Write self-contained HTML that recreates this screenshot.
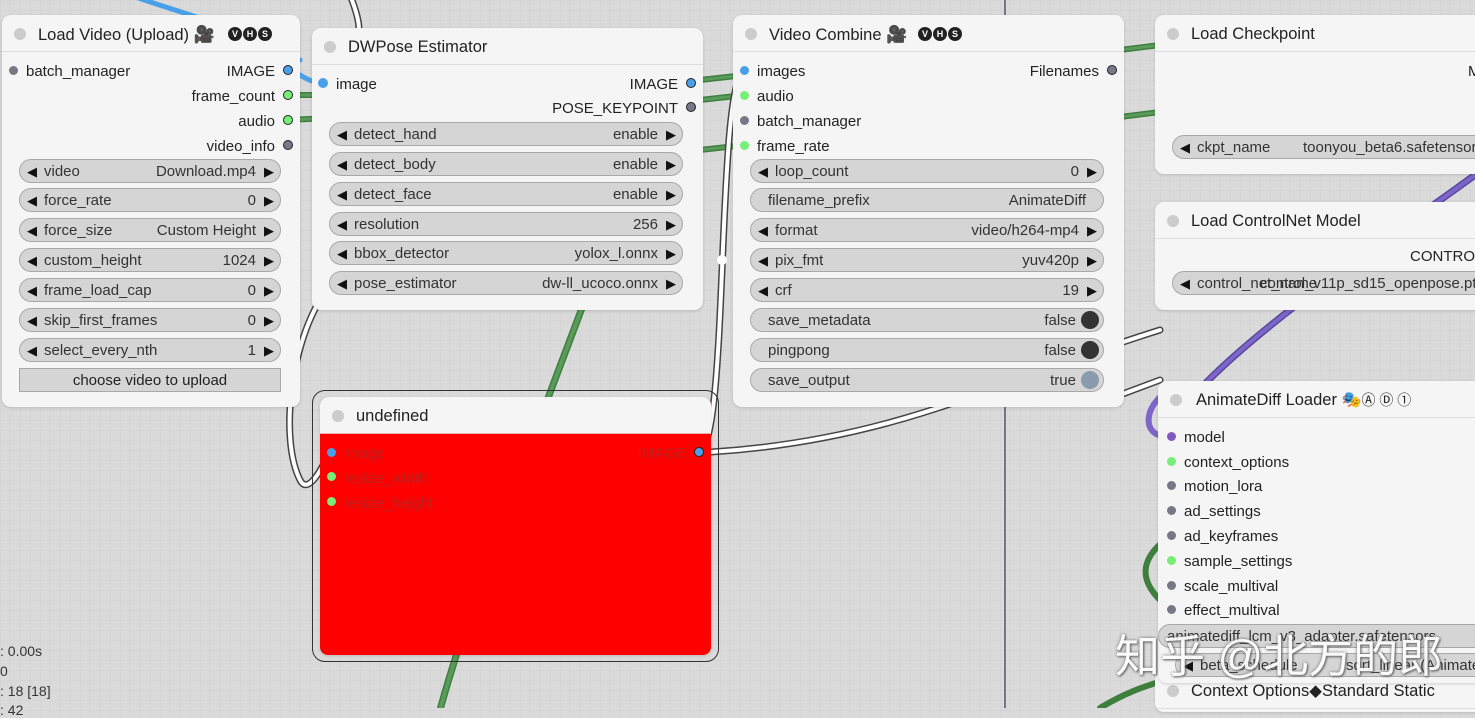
<!DOCTYPE html>
<html><head><meta charset="utf-8"><style>
*{box-sizing:border-box;margin:0;padding:0}
body{width:1475px;height:708px;overflow:hidden;position:relative;background:#dadada;font-family:"Liberation Sans",Arial,sans-serif;color:#222;font-size:15px;
background-image:linear-gradient(#d5d5d5 1px,transparent 1px),linear-gradient(90deg,#d5d5d5 1px,transparent 1px);background-size:10px 10px}
.n{position:absolute;background:#f5f5f5;border-radius:9px;box-shadow:0 1px 3px rgba(0,0,0,.15);overflow:hidden}
.t{position:absolute;left:0;right:0;top:0;height:37px;border-bottom:1px solid #ddd;font-size:16.5px;line-height:39px;padding-left:36px;white-space:nowrap}
.t:before{content:"";position:absolute;left:12px;top:13px;width:12px;height:12px;border-radius:50%;background:#ccc}
.r{position:absolute;font-size:15px;line-height:16px;white-space:nowrap}
.d{position:absolute;width:10px;height:10px;border-radius:50%;border:1px solid #222}
.di{position:absolute;width:9px;height:9px;border-radius:50%}
.w{position:absolute;height:24px;border-radius:12px;background:#d5d5d5;border:1px solid #a8a8a8;font-size:15px;line-height:24px;color:#333;white-space:nowrap;overflow:hidden}
.w .l{position:absolute;left:24px}.w .v{position:absolute;right:24px}
.w .a{position:absolute;left:7px;font-size:13px;color:#111}.w .b{position:absolute;right:6px;font-size:13px;color:#111}
.w.nt .l{left:17px}.w.nt .v{right:17px}
.w.tg .v{right:27px}
.w.tg i{position:absolute;right:4px;top:2px;width:18px;height:18px;border-radius:50%;background:#333}
.bd{position:absolute;width:14px;height:14px;border-radius:50%;background:#222;color:#fff;font-size:9px;line-height:14px;text-align:center;font-weight:bold;top:12px}
</style></head><body>
<svg width="1475" height="708" style="position:absolute;left:0;top:0">
<line x1="1005" y1="0" x2="1005" y2="708" stroke="#556" stroke-width="1.5"/>
<g fill="none" stroke-linecap="round">
<path d="M130 -5 C170 10 250 30 300 60" stroke="#4aa0e8" stroke-width="5"/>
<path d="M287 70 C300 72 305 82 323 83" stroke="#4aa0e8" stroke-width="5"/>
<path d="M287 95 L330 95" stroke="#3e7f3e" stroke-width="6"/><path d="M287 95 L330 95" stroke="#5a9a5a" stroke-width="3"/>
<path d="M287 120 L330 118" stroke="#3e7f3e" stroke-width="6"/><path d="M287 120 L330 118" stroke="#5a9a5a" stroke-width="3"/>
<path d="M700 80 L745 75 M700 100 L745 95 M700 150 L745 145" stroke="#3e7f3e" stroke-width="6"/>
<path d="M700 80 L745 75 M700 100 L745 95 M700 150 L745 145" stroke="#5a9a5a" stroke-width="3"/>
<path d="M1120 50 L1160 45 M1120 117 L1160 112" stroke="#3e7f3e" stroke-width="6"/>
<path d="M1120 50 L1160 45 M1120 117 L1160 112" stroke="#5a9a5a" stroke-width="3"/>
<path d="M585 300 C540 420 470 600 440 710" stroke="#3e7f3e" stroke-width="7"/>
<path d="M585 300 C540 420 470 600 440 710" stroke="#5a9a5a" stroke-width="4"/>
<path d="M1100 708 C1130 690 1150 685 1165 680" stroke="#3e7f3e" stroke-width="6"/>
<path d="M1160 600 C1140 580 1140 560 1165 540" stroke="#3e7f3e" stroke-width="6"/>
<path d="M1475 175 C1400 230 1250 330 1190 400" stroke="#5a47a0" stroke-width="7"/>
<path d="M1475 175 C1400 230 1250 330 1190 400" stroke="#7e66c8" stroke-width="4"/>
<path d="M1180 385 C1140 400 1140 440 1170 436" stroke="#7e66c8" stroke-width="6"/>
<g stroke="#444" stroke-width="7"><path d="M350 -5 C360 20 360 30 358 40"/><path d="M320 300 C290 350 280 440 300 480 C310 500 330 450 330 452"/><path d="M698 452 C730 452 715 80 745 70"/><path d="M711 452 C900 440 1000 380 1160 330"/><path d="M1120 395 L1160 380"/></g>
<g stroke="#fff" stroke-width="4"><path d="M350 -5 C360 20 360 30 358 40"/><path d="M320 300 C290 350 280 440 300 480 C310 500 330 450 330 452"/><path d="M698 452 C730 452 715 80 745 70"/><path d="M711 452 C900 440 1000 380 1160 330"/><path d="M1120 395 L1160 380"/></g>
</g>
<circle cx="722" cy="260" r="5" fill="#fff"/>
</svg>

<!-- Load Video -->
<div class="n" style="left:2px;top:15px;width:298px;height:392px">
<div class="t">Load Video (Upload) <span style="font-size:17px">🎥</span></div>
<div class="bd" style="left:226px">V</div><div class="bd" style="left:241px">H</div><div class="bd" style="left:256px">S</div>
<div class="di" style="left:7px;top:51px;background:#778"></div><div class="r" style="left:24px;top:49px">batch_manager</div>
<div class="r" style="right:25px;top:49px">IMAGE</div><div class="d" style="right:7px;top:50px;background:#4aa0e8"></div>
<div class="r" style="right:25px;top:74px">frame_count</div><div class="d" style="right:7px;top:75px;background:#7e7"></div>
<div class="r" style="right:25px;top:99px">audio</div><div class="d" style="right:7px;top:100px;background:#7e7"></div>
<div class="r" style="right:25px;top:124px">video_info</div><div class="d" style="right:7px;top:125px;background:#778"></div>
<div class="w" style="left:17px;width:262px;top:144px"><span class="a">◀</span><span class="l">video</span><span class="v">Download.mp4</span><span class="b">▶</span></div>
<div class="w" style="left:17px;width:262px;top:173px"><span class="a">◀</span><span class="l">force_rate</span><span class="v">0</span><span class="b">▶</span></div>
<div class="w" style="left:17px;width:262px;top:203px"><span class="a">◀</span><span class="l">force_size</span><span class="v">Custom Height</span><span class="b">▶</span></div>
<div class="w" style="left:17px;width:262px;top:233px"><span class="a">◀</span><span class="l">custom_height</span><span class="v">1024</span><span class="b">▶</span></div>
<div class="w" style="left:17px;width:262px;top:263px"><span class="a">◀</span><span class="l">frame_load_cap</span><span class="v">0</span><span class="b">▶</span></div>
<div class="w" style="left:17px;width:262px;top:293px"><span class="a">◀</span><span class="l">skip_first_frames</span><span class="v">0</span><span class="b">▶</span></div>
<div class="w" style="left:17px;width:262px;top:323px"><span class="a">◀</span><span class="l">select_every_nth</span><span class="v">1</span><span class="b">▶</span></div>
<div class="w" style="left:17px;width:262px;top:353px;border-radius:0;text-align:center;color:#222">choose video to upload</div>
</div>

<!-- DWPose -->
<div class="n" style="left:312px;top:28px;width:391px;height:282px">
<div class="t">DWPose Estimator</div>
<div class="d" style="left:6px;top:50px;background:#4aa0e8;border:none"></div><div class="r" style="left:24px;top:49px">image</div>
<div class="r" style="right:25px;top:49px">IMAGE</div><div class="d" style="right:7px;top:50px;background:#4aa0e8"></div>
<div class="r" style="right:25px;top:73px">POSE_KEYPOINT</div><div class="d" style="right:7px;top:74px;background:#778"></div>
<div class="w" style="left:17px;width:354px;top:94px"><span class="a">◀</span><span class="l">detect_hand</span><span class="v">enable</span><span class="b">▶</span></div>
<div class="w" style="left:17px;width:354px;top:124px"><span class="a">◀</span><span class="l">detect_body</span><span class="v">enable</span><span class="b">▶</span></div>
<div class="w" style="left:17px;width:354px;top:154px"><span class="a">◀</span><span class="l">detect_face</span><span class="v">enable</span><span class="b">▶</span></div>
<div class="w" style="left:17px;width:354px;top:184px"><span class="a">◀</span><span class="l">resolution</span><span class="v">256</span><span class="b">▶</span></div>
<div class="w" style="left:17px;width:354px;top:213px"><span class="a">◀</span><span class="l">bbox_detector</span><span class="v">yolox_l.onnx</span><span class="b">▶</span></div>
<div class="w" style="left:17px;width:354px;top:243px"><span class="a">◀</span><span class="l">pose_estimator</span><span class="v">dw-ll_ucoco.onnx</span><span class="b">▶</span></div>
</div>

<!-- Video Combine -->
<div class="n" style="left:733px;top:15px;width:391px;height:392px">
<div class="t">Video Combine <span style="font-size:17px">🎥</span></div>
<div class="bd" style="left:185px">V</div><div class="bd" style="left:200px">H</div><div class="bd" style="left:215px">S</div>
<div class="di" style="left:7px;top:51px;background:#4aa0e8"></div><div class="r" style="left:24px;top:49px">images</div>
<div class="di" style="left:7px;top:76px;background:#7e7"></div><div class="r" style="left:24px;top:74px">audio</div>
<div class="di" style="left:7px;top:101px;background:#778"></div><div class="r" style="left:24px;top:99px">batch_manager</div>
<div class="di" style="left:7px;top:126px;background:#7e7"></div><div class="r" style="left:24px;top:124px">frame_rate</div>
<div class="r" style="right:25px;top:49px">Filenames</div><div class="d" style="right:7px;top:50px;background:#778"></div>
<div class="w" style="left:17px;width:354px;top:144px"><span class="a">◀</span><span class="l">loop_count</span><span class="v">0</span><span class="b">▶</span></div>
<div class="w nt" style="left:17px;width:354px;top:173px"><span class="l">filename_prefix</span><span class="v">AnimateDiff</span></div>
<div class="w" style="left:17px;width:354px;top:203px"><span class="a">◀</span><span class="l">format</span><span class="v">video/h264-mp4</span><span class="b">▶</span></div>
<div class="w" style="left:17px;width:354px;top:233px"><span class="a">◀</span><span class="l">pix_fmt</span><span class="v">yuv420p</span><span class="b">▶</span></div>
<div class="w" style="left:17px;width:354px;top:263px"><span class="a">◀</span><span class="l">crf</span><span class="v">19</span><span class="b">▶</span></div>
<div class="w nt tg" style="left:17px;width:354px;top:293px"><span class="l">save_metadata</span><span class="v">false</span><i></i></div>
<div class="w nt tg" style="left:17px;width:354px;top:323px"><span class="l">pingpong</span><span class="v">false</span><i></i></div>
<div class="w nt tg" style="left:17px;width:354px;top:353px"><span class="l">save_output</span><span class="v">true</span><i style="background:#8a9bb0"></i></div>
</div>

<!-- Load Checkpoint -->
<div class="n" style="left:1155px;top:15px;width:330px;height:159px">
<div class="t">Load Checkpoint</div>
<div class="r" style="left:313px;top:49px">M</div>
<div class="w" style="left:17px;width:330px;top:120px"><span class="a">◀</span><span class="l">ckpt_name</span><span class="v" style="left:130px;right:auto">toonyou_beta6.safetensors</span></div>
</div>

<!-- Load ControlNet -->
<div class="n" style="left:1155px;top:202px;width:330px;height:108px">
<div class="t">Load ControlNet Model</div>
<div class="r" style="left:255px;top:47px">CONTROL</div>
<div class="w" style="left:17px;width:330px;top:69px"><span class="a">◀</span><span class="l">control_net_name</span><span class="v" style="left:87px;right:auto">control_v11p_sd15_openpose.pth</span></div>
</div>

<div class="n" style="left:1155px;top:672px;width:330px;height:40px"><div class="t">Context Options◆Standard Static</div></div>
<!-- AnimateDiff Loader -->
<div class="n" style="left:1158px;top:381px;width:330px;height:302px">
<div class="t" style="padding-left:38px">AnimateDiff Loader <span style="font-size:16px">🎭</span><span style="font-size:14px">Ⓐ Ⓓ ①</span></div>
<div class="di" style="left:9px;top:51px;background:#7e57c2"></div><div class="r" style="left:26px;top:49px">model</div>
<div class="di" style="left:9px;top:76px;background:#7e7"></div><div class="r" style="left:26px;top:74px">context_options</div>
<div class="di" style="left:9px;top:100px;background:#778"></div><div class="r" style="left:26px;top:98px">motion_lora</div>
<div class="di" style="left:9px;top:125px;background:#778"></div><div class="r" style="left:26px;top:123px">ad_settings</div>
<div class="di" style="left:9px;top:150px;background:#778"></div><div class="r" style="left:26px;top:148px">ad_keyframes</div>
<div class="di" style="left:9px;top:175px;background:#7e7"></div><div class="r" style="left:26px;top:173px">sample_settings</div>
<div class="di" style="left:9px;top:200px;background:#778"></div><div class="r" style="left:26px;top:198px">scale_multival</div>
<div class="di" style="left:9px;top:224px;background:#778"></div><div class="r" style="left:26px;top:222px">effect_multival</div>
<div class="w" style="left:0px;width:340px;top:243px"><span class="l" style="left:8px">animatediff_lcm_v3_adapter.safetensors</span></div>
<div class="w" style="left:17px;width:330px;top:272px"><span class="a">◀</span><span class="l">beta_schedule</span><span class="v" style="left:170px;right:auto">sqrt_linear (AnimateDiff)</span></div>
</div>

<!-- undefined -->
<div style="position:absolute;left:312px;top:390px;width:407px;height:272px;border:1.5px solid #333;border-radius:13px"></div>
<div class="n" style="left:320px;top:397px;width:391px;height:258px;background:#f00;border-radius:8px">
<div class="t" style="background:#f5f5f5;border-bottom:1px solid #e6b0b0">undefined</div>
<div class="di" style="left:7px;top:51px;background:#4aa0e8"></div><div class="r" style="left:24px;top:49px;color:#b22">image</div>
<div class="di" style="left:7px;top:75px;background:#7e7"></div><div class="r" style="left:24px;top:74px;color:#b22">resize_width</div>
<div class="di" style="left:7px;top:100px;background:#7e7"></div><div class="r" style="left:24px;top:99px;color:#b22">resize_height</div>
<div class="r" style="right:25px;top:49px;color:#b22">IMAGE</div><div class="d" style="right:7px;top:50px;background:#4aa0e8"></div>
</div>

<div class="r" style="left:0;top:643px;font-size:14px;color:#333">: 0.00s</div>
<div class="r" style="left:0;top:663px;font-size:14px;color:#333">0</div>
<div class="r" style="left:0;top:683px;font-size:14px;color:#333">: 18 [18]</div>
<div class="r" style="left:0;top:702px;font-size:14px;color:#333">: 42</div>

<div style="position:absolute;left:1115px;top:620px;font-family:'Liberation Sans','Noto Sans CJK SC',sans-serif;font-size:45px;color:#fff;text-shadow:0 0 3px #666,1px 1px 2px #555;white-space:nowrap;opacity:.9">知乎 @北方的郎</div>
</body></html>
